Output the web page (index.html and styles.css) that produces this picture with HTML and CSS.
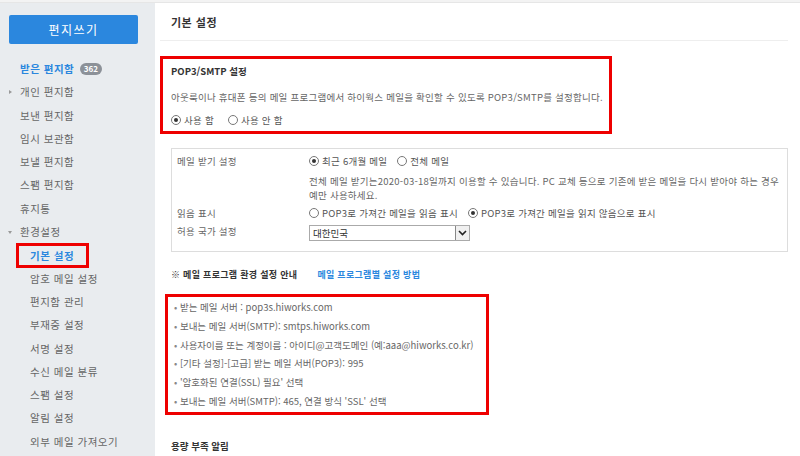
FILE: index.html
```html
<!DOCTYPE html>
<html lang="ko">
  <head>
    <meta charset="utf-8">
    <meta name="viewport" content="width=device-width, initial-scale=1">
    <title>메일 환경설정</title>
    <link rel="stylesheet" href="styles.css">
  </head>
  <body>
    <div class="top-strip"></div>
    <div class="page">

      <!-- 왼쪽 메뉴 -->
      <nav class="sidebar">
        <button class="compose-button" type="button">편지쓰기</button>
        <ul class="menu">
          <li class="menu-item active">받은 편지함 <span class="badge">362</span></li>
          <li class="menu-item folder closed">개인 편지함</li>
          <li class="menu-item">보낸 편지함</li>
          <li class="menu-item">임시 보관함</li>
          <li class="menu-item">보낼 편지함</li>
          <li class="menu-item">스팸 편지함</li>
          <li class="menu-item">휴지통</li>
          <li class="menu-item folder open">환경설정</li>
          <li class="menu-item sub current"><span class="mark">기본 설정</span></li>
          <li class="menu-item sub">암호 메일 설정</li>
          <li class="menu-item sub">편지함 관리</li>
          <li class="menu-item sub">부재중 설정</li>
          <li class="menu-item sub">서명 설정</li>
          <li class="menu-item sub">수신 메일 분류</li>
          <li class="menu-item sub">스팸 설정</li>
          <li class="menu-item sub">알림 설정</li>
          <li class="menu-item sub">외부 메일 가져오기</li>
        </ul>
      </nav>

      <!-- 설정 본문 -->
      <main class="content">
        <h2 class="page-title">기본 설정</h2>

        <section class="pop-section mark-box">
          <h3 class="section-title">POP3/SMTP 설정</h3>
          <p class="section-desc">아웃룩이나 휴대폰 등의 메일 프로그램에서 하이웍스 메일을 확인할 수 있도록 POP3/SMTP를 설정합니다.</p>
          <div class="radio-row">
            <label class="radio"><span class="dot checked"></span>사용 함</label>
            <label class="radio"><span class="dot"></span>사용 안 함</label>
          </div>
        </section>

        <div class="settings-table">
          <div class="setting-row">
            <div class="setting-label">메일 받기 설정</div>
            <div class="setting-value">
              <div class="radio-row">
                <label class="radio"><span class="dot checked"></span>최근 6개월 메일</label>
                <label class="radio"><span class="dot"></span>전체 메일</label>
              </div>
              <p class="setting-note">전체 메일 받기는2020-03-18일까지 이용할 수 있습니다. PC 교체 등으로 기존에 받은 메일을 다시 받아야 하는 경우 예만 사용하세요.</p>
            </div>
          </div>
          <div class="setting-row">
            <div class="setting-label">읽음 표시</div>
            <div class="setting-value">
              <div class="radio-row">
                <label class="radio"><span class="dot"></span>POP3로 가져간 메일을 읽음 표시</label>
                <label class="radio"><span class="dot checked"></span>POP3로 가져간 메일을 읽지 않음으로 표시</label>
              </div>
            </div>
          </div>
          <div class="setting-row">
            <div class="setting-label">허용 국가 설정</div>
            <div class="setting-value">
              <div class="select-box">
                <span class="select-text">대한민국</span>
                <span class="select-arrow">
                  <svg width="9" height="6" viewBox="0 0 9 6"><path d="M1 1 L4.5 4.5 L8 1" fill="none" stroke="#222" stroke-width="1.6"/></svg>
                </span>
              </div>
            </div>
          </div>
        </div>

        <div class="guide-head">
          <span class="guide-title">※ 메일 프로그램 환경 설정 안내</span>
          <a class="guide-link" href="#">메일 프로그램별 설정 방법</a>
        </div>

        <ul class="guide-list mark-box">
          <li>받는 메일 서버 : pop3s.hiworks.com</li>
          <li>보내는 메일 서버(SMTP): smtps.hiworks.com</li>
          <li>사용자이름 또는 계정이름 : 아이디@고객도메인 (예:aaa@hiworks.co.kr)</li>
          <li>[기타 설정]-[고급] 받는 메일 서버(POP3): 995</li>
          <li>'암호화된 연결(SSL) 필요' 선택</li>
          <li>보내는 메일 서버(SMTP): 465, 연결 방식 'SSL' 선택</li>
        </ul>

        <h3 class="section-title quota">용량 부족 알림</h3>
      </main>
    </div>
  </body>
</html>
```

FILE: styles.css
```css
/* 기본 */
* {
    box-sizing: border-box;
}

body {
    margin: 0;
    height: 456px;
    overflow: hidden;
    font-family: 'Noto Sans CJK KR', 'Noto Sans', sans-serif;
    font-size: 10px;
    color: #666666;
    background-color: #ffffff;
}

.top-strip {
    height: 3px;
    background-color: #f3f3f3;
    border-bottom: 1px solid #e6e6e6;
}

.page {
    display: flex;
    height: 453px;
}

/* 왼쪽 메뉴 */
.sidebar {
    width: 155px;
    flex-shrink: 0;
    background-color: #e9ecef;
    padding: 12px 0 0 9px;
}

.compose-button {
    display: block;
    width: 129px;
    height: 29px;
    border: none;
    border-radius: 2px;
    background-color: #2b87de;
    color: #ffffff;
    font-family: inherit;
    font-size: 12px;
    font-weight: normal;
    letter-spacing: 1.5px;
    cursor: pointer;
}

.menu {
    list-style: none;
    margin: 13px 0 0 0;
    padding: 0;
}

.menu-item {
    position: relative;
    height: 23.3px;
    line-height: 23.3px;
    padding-left: 11px;
    font-size: 10.5px;
    color: #666666;
    letter-spacing: 0.5px;
}

.menu-item.active {
    color: #2b87de;
    font-weight: bold;
}

.badge {
    display: inline-block;
    height: 12px;
    line-height: 12px;
    padding: 0 4px;
    margin-left: 2px;
    border-radius: 6px;
    background-color: #8c9198;
    color: #ffffff;
    font-size: 8px;
    font-weight: bold;
    letter-spacing: 0;
    vertical-align: 1px;
}

.folder::before {
    content: '';
    position: absolute;
    left: 0;
    top: 10px;
    border-style: solid;
    border-color: transparent;
}

.folder.closed::before {
    border-width: 2.5px 0 2.5px 3px;
    border-left-color: #999999;
}

.folder.open::before {
    top: 11px;
    left: -1px;
    border-width: 3px 2.5px 0 2.5px;
    border-top-color: #999999;
}

.menu-item.sub {
    padding-left: 21px;
}

.menu-item.current {
    padding-left: 7px;
}

.menu-item.current .mark {
    display: inline-block;
    width: 73px;
    height: 25px;
    line-height: 20px;
    padding-left: 11px;
    border: 3px solid #ee0000;
    color: #2b87de;
    font-weight: bold;
}

/* 설정 본문 */
.content {
    flex: 1;
    padding: 0 12px 0 5px;
}

.page-title {
    margin: 0;
    height: 38px;
    line-height: 38px;
    padding-left: 11px;
    font-size: 11px;
    font-weight: bold;
    color: #333333;
    border-bottom: 1px solid #eeeeee;
    letter-spacing: 0.5px;
}

.mark-box {
    border: 3px solid #ee0000;
}

.pop-section {
    width: 452px;
    height: 78px;
    margin: 15px 0 0 0;
    padding: 5px 0 0 8px;
}

.section-title {
    margin: 0;
    font-size: 9.5px;
    font-weight: bold;
    color: #333333;
}

.section-desc {
    margin: 12px 0 0 0;
    font-size: 9.5px;
    letter-spacing: 0.25px;
}

.radio-row {
    display: flex;
    gap: 10px;
}

.pop-section .radio-row {
    margin-top: 9px;
    gap: 14px;
}

.radio {
    display: flex;
    align-items: center;
    gap: 3px;
    font-size: 9.5px;
    color: #555555;
    letter-spacing: 0.25px;
}

.dot {
    position: relative;
    width: 10px;
    height: 10px;
    border: 1px solid #777777;
    border-radius: 50%;
    background-color: #ffffff;
}

.dot.checked::after {
    content: '';
    position: absolute;
    left: 2px;
    top: 2px;
    width: 4px;
    height: 4px;
    border-radius: 50%;
    background-color: #333333;
}

/* 설정 표 */
.settings-table {
    width: 617px;
    margin: 14px 0 0 11px;
    padding: 5px 0 6px 0;
    border: 1px solid #dddddd;
}

.setting-row {
    display: flex;
    padding: 0 0 4px 0;
}

.setting-label {
    width: 137px;
    flex-shrink: 0;
    padding-left: 5px;
    font-size: 9.5px;
    line-height: 14px;
    letter-spacing: 0.25px;
}

.setting-value {
    flex: 1;
    padding-right: 2px;
}

.setting-value .radio {
    line-height: 14px;
}

.setting-note {
    margin: 6px 0 0 0;
    font-size: 9.5px;
    line-height: 14px;
    letter-spacing: 0.25px;
}

.select-box {
    display: flex;
    width: 161px;
    height: 16px;
    margin-top: 1px;
    border: 1px solid #aaaaaa;
    background-color: #ffffff;
}

.select-text {
    flex: 1;
    padding-left: 3px;
    font-size: 9.5px;
    line-height: 14px;
    color: #333333;
}

.select-arrow {
    display: flex;
    align-items: center;
    justify-content: center;
    width: 14px;
    border-left: 1px solid #888888;
    background-color: #f0f0f0;
}

/* 환경 설정 안내 */
.guide-head {
    display: flex;
    gap: 20px;
    margin: 16px 0 0 11px;
    font-size: 9px;
    font-weight: bold;
    letter-spacing: 0.3px;
}

.guide-title {
    color: #333333;
}

.guide-link {
    color: #2b87de;
    text-decoration: none;
}

.guide-list {
    width: 324px;
    height: 121px;
    margin: 13px 0 0 5px;
    padding: 1px 0 0 6px;
    list-style: none;
}

.guide-list li {
    height: 18.8px;
    line-height: 18.8px;
    font-size: 9.5px;
}

.guide-list li::before {
    content: '• ';
    color: #888888;
}

.quota {
    margin: 24px 0 0 11px;
}
```
